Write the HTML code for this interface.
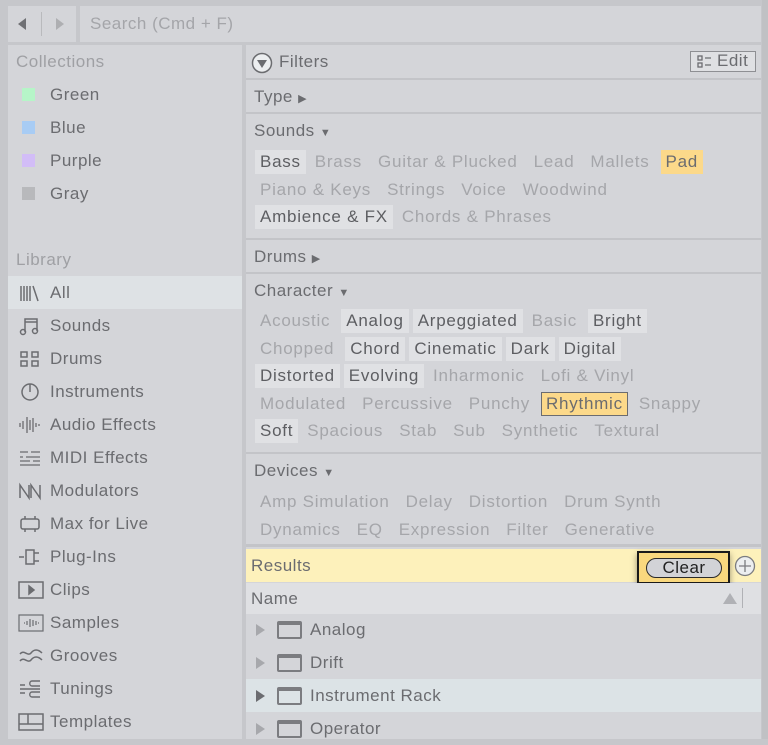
<!DOCTYPE html>
<html><head><style>
*{box-sizing:border-box;margin:0;padding:0}
body{width:768px;height:739px;overflow:hidden;background:#c6c7cb;font-family:"Liberation Sans",sans-serif;font-size:17px;letter-spacing:0.5px;color:#6b6c70;position:relative}
.abs{position:absolute}
.nav{left:8px;top:6px;width:68px;height:36px;background:#d4d5d9}
.search{left:80px;top:6px;width:681px;height:36px;background:#d4d5d9;color:#a4a5a9;padding:8px 10px}
.left{left:8px;top:45px;width:234px;height:694px;background:#d4d5d9}
.right{left:246px;top:45px;width:515px;height:694px;background:#d4d5d9}
.sb{left:762px;top:0;width:6px;height:739px;background:#c0c1c4}
.hd{color:#9fa0a4}
.li{position:absolute;left:0;width:234px;height:33px;line-height:33px;padding-left:42px;color:#6b6c70}
.li svg{position:absolute;left:10px;top:7px}
.sw{position:absolute;left:14px;top:10px;width:13px;height:13px}
.sec{position:absolute;left:0;width:515px;border-bottom:2px solid #c3c4c8}
.st{position:absolute;left:8px;color:#6b6c70}
.tags{position:absolute;left:9px;width:510px;line-height:27.5px;letter-spacing:0.75px}
.t{display:inline-block;padding:0 5px;margin-right:6px;height:24px;line-height:24px;color:#a5a6aa;vertical-align:top;margin-bottom:3.5px}
.a{background:#e0e1e4;color:#5d5e62;margin-right:4px}
.y{background:#fcd98a;color:#6b6c70}
.row{position:absolute;left:0;width:515px;height:33px;line-height:33px;padding-left:64px}
.row .tri{position:absolute;left:10px;top:11px;width:0;height:0;border-left:9px solid #a7a8ac;border-top:6px solid transparent;border-bottom:6px solid transparent}
.row .fo{position:absolute;left:31px;top:8px;width:25px;height:18px;border:2px solid #7b7c80;border-top-width:4px;border-radius:2px}
</style></head><body>
<div class="abs nav">
 <div class="abs" style="left:10px;top:12px;border-right:8px solid #6f7074;border-top:6px solid transparent;border-bottom:6px solid transparent"></div>
 <div class="abs" style="left:33px;top:6px;width:1px;height:24px;background:#b9babd"></div>
 <div class="abs" style="left:48px;top:12px;border-left:8px solid #aeafb2;border-top:6px solid transparent;border-bottom:6px solid transparent"></div>
</div>
<div class="abs search">Search (Cmd + F)</div>
<div class="abs left">
 <div class="abs hd" style="left:8px;top:7px">Collections</div>
 <div class="li" style="top:33px"><div class="sw" style="background:#b6f5c8"></div>Green</div>
 <div class="li" style="top:66px"><div class="sw" style="background:#a8ccf4"></div>Blue</div>
 <div class="li" style="top:99px"><div class="sw" style="background:#d2bdf7"></div>Purple</div>
 <div class="li" style="top:132px"><div class="sw" style="background:#b8b9bc"></div>Gray</div>
 <div class="abs hd" style="left:8px;top:205px">Library</div>
 <div class="li" style="top:231px;background:#dee2e5"><svg width="24" height="20" stroke="#6b6c70" stroke-width="1.5" fill="none"><path d="M3 3v15M6 3v15M9 3v15M12 3v15M15 3l5 15"/></svg>All</div>
 <div class="li" style="top:264px"><svg width="24" height="20" stroke="#6b6c70" stroke-width="1.5" fill="none"><path d="M7 16V3h12v12M7 6h12"/><circle cx="5" cy="16" r="2.5"/><circle cx="17" cy="15" r="2.5"/></svg>Sounds</div>
 <div class="li" style="top:297px"><svg width="24" height="20" stroke="#6b6c70" stroke-width="1.5" fill="none"><rect x="3" y="3" width="6" height="5"/><rect x="14" y="3" width="6" height="5"/><rect x="3" y="12" width="6" height="5"/><rect x="14" y="12" width="6" height="5"/></svg>Drums</div>
 <div class="li" style="top:330px"><svg width="24" height="20" stroke="#6b6c70" stroke-width="1.5" fill="none"><circle cx="12" cy="10" r="8"/><path d="M12 2v8"/></svg>Instruments</div>
 <div class="li" style="top:363px"><svg width="24" height="20" stroke="#6b6c70" stroke-width="1.3" fill="none"><path d="M2 8v4M5 6v8M9 2v16M12 5v10M15 3v14M18 8v4M21 9v2"/></svg>Audio Effects</div>
 <div class="li" style="top:396px"><svg width="24" height="20" stroke="#6b6c70" stroke-width="1.3" fill="none"><path d="M2 4h8M13 4h9M2 9h3M8 9h14M2 13h10M15 13h7M2 17h20"/></svg>MIDI Effects</div>
 <div class="li" style="top:429px"><svg width="24" height="20" stroke="#6b6c70" stroke-width="1.5" fill="none"><path d="M2 17V4l9 13V4M13 17V4l9 13V4"/></svg>Modulators</div>
 <div class="li" style="top:462px"><svg width="24" height="20" stroke="#6b6c70" stroke-width="1.5" fill="none"><rect x="3" y="5" width="18" height="10" rx="2"/><path d="M7 2v3M17 2v3M7 15v3M17 15v3"/></svg>Max for Live</div>
 <div class="li" style="top:495px"><svg width="24" height="20" stroke="#6b6c70" stroke-width="1.5" fill="none"><path d="M1 10h5M16 6h5M16 14h5"/><path d="M16 3H8v14h8z"/></svg>Plug-Ins</div>
 <div class="li" style="top:528px"><svg width="26" height="20" stroke="#6b6c70" stroke-width="1.5" fill="none"><rect x="1" y="2" width="24" height="16"/><path d="M11 6l5 4-5 4z" fill="#6b6c70"/></svg>Clips</div>
 <div class="li" style="top:561px"><svg width="26" height="20" stroke="#6b6c70" stroke-width="1.2" fill="none"><rect x="1" y="2" width="24" height="16"/><path d="M6 10h1M9 8v4M12 6v8M15 7v6M18 8v4M20 10h1"/></svg>Samples</div>
 <div class="li" style="top:594px"><svg width="26" height="20" stroke="#6b6c70" stroke-width="1.5" fill="none"><path d="M2 8c4-5 8 3 11-1s7-4 11 0M2 15c4-5 8 3 11-1s7-4 11 0"/></svg>Grooves</div>
 <div class="li" style="top:627px"><svg width="26" height="20" stroke="#6b6c70" stroke-width="1.4" fill="none"><path d="M22 2h-8c-3 0-3 5 0 5h8M2 10h20M22 18h-8c-3 0-3-5 0-5h8M2 6h5M2 14h5"/></svg>Tunings</div>
 <div class="li" style="top:660px"><svg width="26" height="20" stroke="#6b6c70" stroke-width="1.5" fill="none"><rect x="1" y="2" width="24" height="16"/><path d="M1 12h24M10 2v10"/></svg>Templates</div>
</div>
<div class="abs right">
 <div class="sec" style="top:0;height:35px">
  <svg class="abs" style="left:5px;top:7px" width="22" height="22"><circle cx="11" cy="11" r="9.5" fill="#eceef0" stroke="#6b6c70" stroke-width="1.5"/><path d="M6 8h10l-5 8z" fill="#6b6c70"/></svg>
  <div class="st" style="left:33px;top:7px">Filters</div>
  <div class="abs" style="left:444px;top:6px;width:66px;height:21px;border:1.5px solid #8e8f93;background:#dfe0e3;color:#6b6c70;line-height:18px;padding-left:26px">Edit
   <svg class="abs" style="left:6px;top:3px" width="16" height="13" stroke="#6b6c70" stroke-width="1.3" fill="none"><rect x="1" y="1" width="4" height="4"/><rect x="1" y="8" width="4" height="4"/><path d="M8 3h6M8 10h6"/></svg></div>
 </div>
 <div class="sec" style="top:35px;height:34px"><div class="st" style="top:7px">Type <span style="font-size:11px">▶</span></div></div>
 <div class="sec" style="top:69px;height:126px"><div class="st" style="top:7px">Sounds <span style="font-size:11px">▼</span></div>
  <div class="tags" style="top:36px"><span class="t a">Bass</span><span class="t">Brass</span><span class="t">Guitar &amp; Plucked</span><span class="t">Lead</span><span class="t">Mallets</span><span class="t y">Pad</span><br><span class="t">Piano &amp; Keys</span><span class="t">Strings</span><span class="t">Voice</span><span class="t">Woodwind</span><br><span class="t a">Ambience &amp; FX</span><span class="t">Chords &amp; Phrases</span></div>
 </div>
 <div class="sec" style="top:195px;height:34px"><div class="st" style="top:7px">Drums <span style="font-size:11px">▶</span></div></div>
 <div class="sec" style="top:229px;height:180px"><div class="st" style="top:7px">Character <span style="font-size:11px">▼</span></div>
  <div class="tags" style="top:35px"><span class="t">Acoustic</span><span class="t a">Analog</span><span class="t a">Arpeggiated</span><span class="t">Basic</span><span class="t a">Bright</span><br><span class="t">Chopped</span><span class="t a">Chord</span><span class="t a">Cinematic</span><span class="t a">Dark</span><span class="t a">Digital</span><br><span class="t a">Distorted</span><span class="t a">Evolving</span><span class="t">Inharmonic</span><span class="t">Lofi &amp; Vinyl</span><br><span class="t">Modulated</span><span class="t">Percussive</span><span class="t">Punchy</span><span class="t y" style="outline:1.5px solid #6b6c70;outline-offset:-1.5px">Rhythmic</span><span class="t">Snappy</span><br><span class="t a">Soft</span><span class="t">Spacious</span><span class="t">Stab</span><span class="t">Sub</span><span class="t">Synthetic</span><span class="t">Textural</span></div>
 </div>
 <div class="sec" style="top:409px;height:93px;border-bottom:3px solid #c3c4c8"><div class="st" style="top:7px">Devices <span style="font-size:11px">▼</span></div>
  <div class="tags" style="top:36px"><span class="t">Amp Simulation</span><span class="t">Delay</span><span class="t">Distortion</span><span class="t">Drum Synth</span><br><span class="t">Dynamics</span><span class="t">EQ</span><span class="t">Expression</span><span class="t">Filter</span><span class="t">Generative</span></div>
 </div>
 <div class="abs" style="left:0;top:504px;width:515px;height:33px;background:#fdf1bb">
  <div class="st" style="left:5px;top:7px">Results</div>
  <div class="abs" style="left:391px;top:2px;width:93px;height:33px;background:#f9d87e;border:2px solid #1a1a1a;box-shadow:0 3px 6px rgba(0,0,0,.4)">
   <div class="abs" style="left:7px;top:5px;width:76px;height:20px;border:1.5px solid #2a2a2a;border-radius:10px;background:#d2d3d7;color:#222;text-align:center;line-height:17px">Clear</div>
  </div>
  <svg class="abs" style="left:488px;top:6px" width="22" height="22" stroke="#7b7c80" stroke-width="1.3" fill="#eceef0"><circle cx="11" cy="11" r="9.5"/><path d="M11 5v12M5 11h12"/></svg>
 </div>
 <div class="abs" style="left:0;top:538px;width:515px;height:31px;background:#dfe0e3">
  <div class="st" style="left:5px;top:6px">Name</div>
  <div class="abs" style="left:477px;top:10px;border-bottom:11px solid #b0b1b5;border-left:7px solid transparent;border-right:7px solid transparent"></div>
  <div class="abs" style="left:496px;top:5px;width:1px;height:20px;background:#b0b1b5"></div>
 </div>
 <div class="row" style="top:568px"><div class="tri"></div><div class="fo"></div>Analog</div>
 <div class="row" style="top:601px"><div class="tri"></div><div class="fo"></div>Drift</div>
 <div class="row" style="top:634px;background:#dce3e6"><div class="tri" style="border-left-color:#6b6c70"></div><div class="fo"></div>Instrument Rack</div>
 <div class="row" style="top:667px"><div class="tri"></div><div class="fo"></div>Operator</div>
</div>
<div class="abs sb"></div>
</body></html>
